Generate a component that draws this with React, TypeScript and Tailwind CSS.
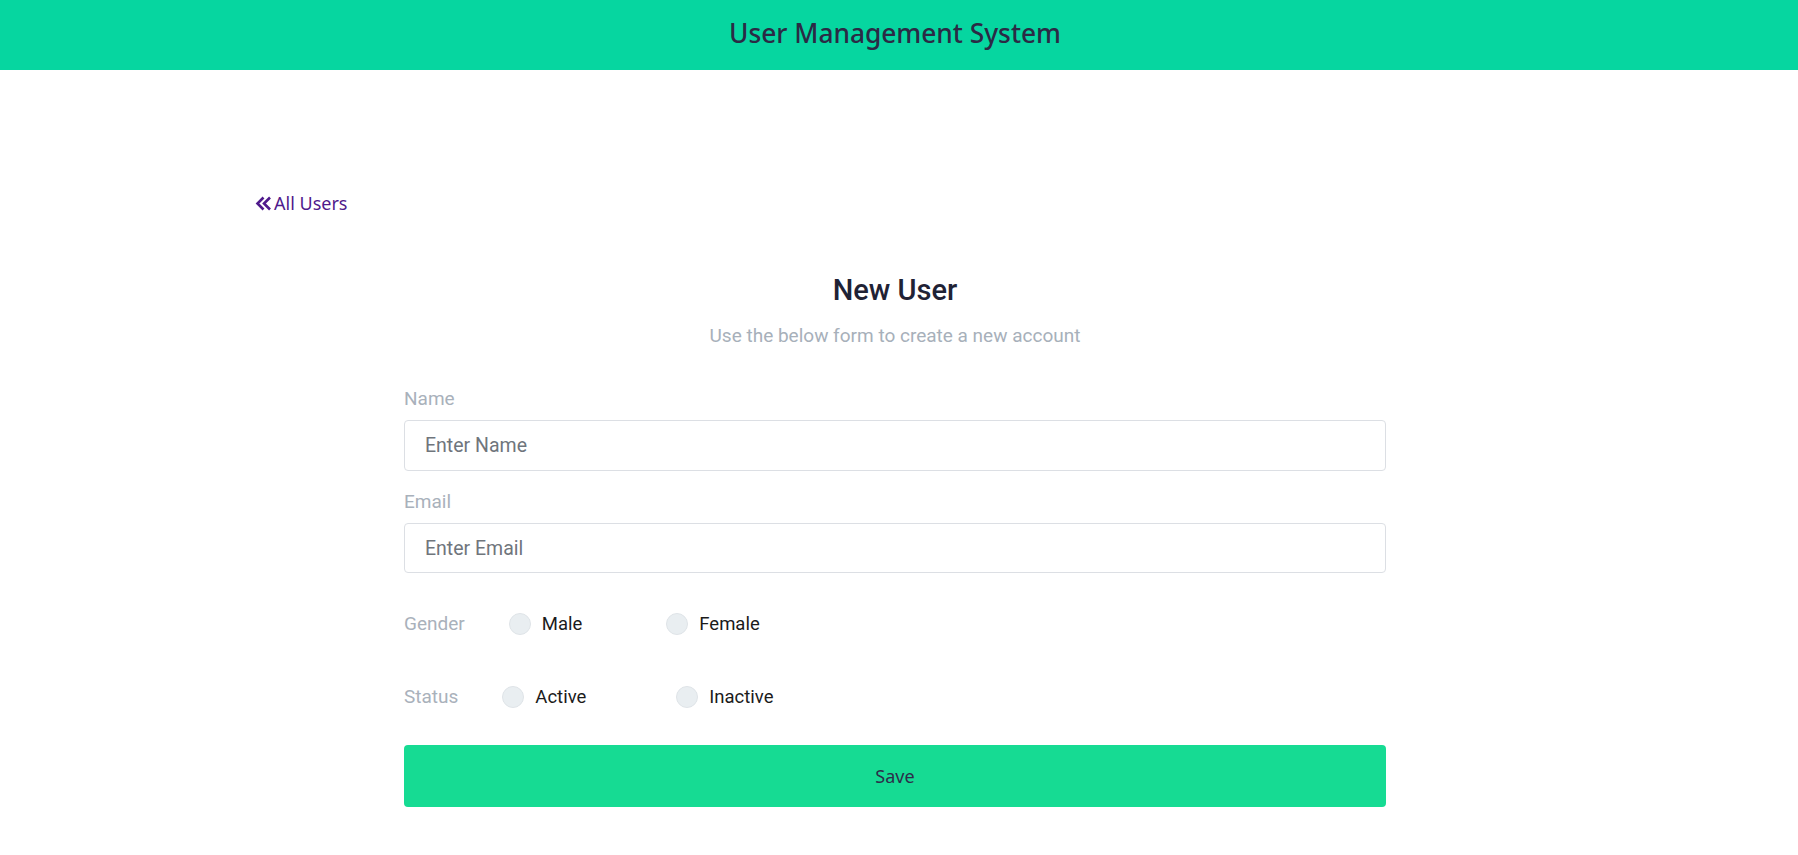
import React from "react";

function Radio({ label, gapAfter }: { label: string; gapAfter: string }) {
  return (
    <label className={`flex items-center ${gapAfter}`}>
      <span className="w-[22px] h-[22px] rounded-full bg-[#e9eef1] border border-[#dfe4e8] shrink-0" />
      <span className="ml-[11px] text-[18.5px] leading-[26px] text-[#1b1b1b]">{label}</span>
    </label>
  );
}

export default function App() {
  return (
    <div className="min-h-screen bg-white" style={{ fontFamily: "Roboto, 'Noto Sans', sans-serif" }}>
      <header className="h-[70px] bg-[#06d6a0] flex items-center justify-center pr-[8px]">
        <h1
          className="text-[26.3px] leading-[36px] font-medium text-[#2b2a45] mt-[-4px]"
          style={{ fontFamily: "'Noto Sans', sans-serif" }}
        >
          User Management System
        </h1>
      </header>
      <div className="pr-[8px]">
        <div className="w-[1280px] mx-auto">
          <a
            href="#"
            className="mt-[119px] flex items-center h-[28px] text-[#4f1a8c] text-[18px]"
            style={{ fontFamily: "'Noto Sans', sans-serif" }}
          >
            <svg width="17" height="15" viewBox="0 0 17 15" className="mr-[2px]">
              <path d="M8.5 1.5 L2.5 7.5 L8.5 13.5 M15 1.5 L9 7.5 L15 13.5" fill="none" stroke="#4f1a8c" strokeWidth="2.6" />
            </svg>
            All Users
          </a>
          <div className="w-[982px] mx-auto">
            <h2 className="mt-[55px] text-center text-[29px] leading-[36px] font-medium text-[#1f2235]">New User</h2>
            <p className="mt-[15px] text-center text-[19px] leading-[26px] text-[#a7b0ba]">
              Use the below form to create a new account
            </p>
            <div className="mt-[37px] text-[19px] leading-[26px] text-[#a9b1bb]">Name</div>
            <input
              placeholder="Enter Name"
              className="mt-[8px] w-full h-[51px] border border-[#dcdfe4] rounded-[4px] px-[20px] text-[19.5px] placeholder:text-[#6f757c] outline-none"
            />
            <div className="mt-[18px] text-[19px] leading-[26px] text-[#a9b1bb]">Email</div>
            <input
              placeholder="Enter Email"
              className="mt-[8px] w-full h-[50px] border border-[#dcdfe4] rounded-[4px] px-[20px] text-[19.5px] placeholder:text-[#6f757c] outline-none"
            />
            <div className="mt-[38px] flex items-center h-[26px]">
              <span className="text-[19px] text-[#a9b1bb] mr-[44px]">Gender</span>
              <Radio label="Male" gapAfter="mr-[84px]" />
              <Radio label="Female" gapAfter="" />
            </div>
            <div className="mt-[47px] flex items-center h-[26px]">
              <span className="text-[19px] text-[#a9b1bb] mr-[44px]">Status</span>
              <Radio label="Active" gapAfter="mr-[90px]" />
              <Radio label="Inactive" gapAfter="" />
            </div>
            <button
              className="mt-[35px] w-full h-[62px] rounded-[4px] bg-[#16db93] text-[18px] text-[#2c2d4a]"
              style={{ fontFamily: "'Noto Sans', sans-serif" }}
            >
              Save
            </button>
          </div>
        </div>
      </div>
    </div>
  );
}
